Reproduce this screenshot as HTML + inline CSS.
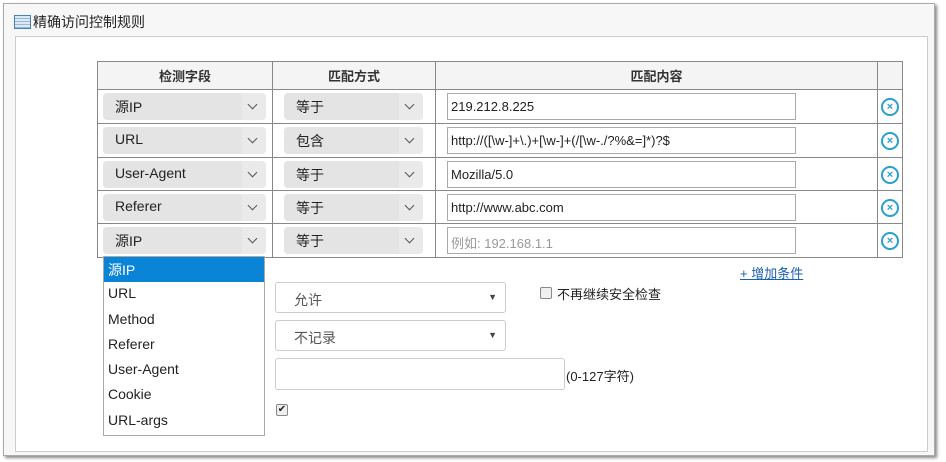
<!DOCTYPE html>
<html><head><meta charset="utf-8"><style>
*{box-sizing:border-box;margin:0;padding:0}
body{width:946px;height:462px;background:#fff;font-family:"Liberation Sans","Noto Sans CJK SC",sans-serif;font-size:14px;color:#222;position:relative;overflow:hidden}
.outer{position:absolute;left:3px;top:3px;width:932px;height:453px;border:1px solid #aaa;box-shadow:2px 2px 3px #888;background:#f7f7f7}
.title{position:absolute;left:14px;top:12px;font-size:14px;color:#222}
.title i{display:inline-block;width:17px;height:14px;border:1px solid #4a7fb5;background:repeating-linear-gradient(#dbe8f5 0 2px,#9bb8d8 2px 3px);vertical-align:-2px;margin-right:2px}
.panel{position:absolute;left:15px;top:36px;width:913px;height:416px;border:1px solid #ccc;background:#fff}
.a{position:absolute}
table{position:absolute;left:97px;top:61px;border-collapse:collapse}
td,th{border:1px solid #888;padding:0}
th{height:28px;background:#f4f4f4;font-weight:bold;font-size:13px;color:#333}
td{height:34px;position:relative}
tr.s td{height:33px}
.sel{position:absolute;top:3px;height:27px;background:#e4e4e4;border-radius:4px;font-size:14px;padding:4px 0 0 12px}
.sel b{position:absolute;right:0;top:0;width:24px;height:27px;background:#eaeaea;border-radius:0 4px 4px 0}
.sel b:after{content:"";position:absolute;left:7px;top:8px;width:6px;height:6px;border-right:1.5px solid #555;border-bottom:1.5px solid #555;transform:rotate(45deg)}
.inp{position:absolute;left:11px;top:3px;width:349px;height:27px;border:1px solid #aaa;font-size:13px;padding:5px 0 0 3px}
.x{position:absolute;left:3px;top:8px;width:18px;height:18px;border:2px solid #2a9fd0;border-radius:50%;color:#2a9fd0;font-size:11px;font-weight:bold;text-align:center;line-height:14px}
.dd{position:absolute;left:103px;top:256px;width:162px;height:180px;border:1px solid #aaa;background:#fff;font-size:14px}
.dd div{height:25.3px;padding:3px 0 0 4px}
.fs{position:absolute;left:275px;width:231px;height:31px;border:1px solid #ccc;border-radius:3px;font-size:14px;color:#555;padding:7px 0 0 18px}
.fs:after{content:"▼";position:absolute;right:8px;top:9px;font-size:9px;color:#444}
</style></head><body>
<div class="outer"></div>
<div class="title"><i></i>精确访问控制规则</div>
<div class="panel"></div>
<table>
<tr><th style="width:175px">检测字段</th><th style="width:163px">匹配方式</th><th style="width:442px">匹配内容</th><th style="width:25px"></th></tr>
<tr><td><div class="sel" style="left:5px;width:163px">源IP<b></b></div></td><td><div class="sel" style="left:11px;width:139px">等于<b></b></div></td><td><div class="inp">219.212.8.225</div></td><td><div class="x">×</div></td></tr>
<tr><td><div class="sel" style="left:5px;width:163px">URL<b></b></div></td><td><div class="sel" style="left:11px;width:139px">包含<b></b></div></td><td><div class="inp">http://([\w-]+\.)+[\w-]+(/[\w-./?%&amp;=]*)?$</div></td><td><div class="x">×</div></td></tr>
<tr class="s"><td><div class="sel" style="left:5px;width:163px">User-Agent<b></b></div></td><td><div class="sel" style="left:11px;width:139px">等于<b></b></div></td><td><div class="inp">Mozilla/5.0</div></td><td><div class="x">×</div></td></tr>
<tr class="s"><td><div class="sel" style="left:5px;width:163px">Referer<b></b></div></td><td><div class="sel" style="left:11px;width:139px">等于<b></b></div></td><td><div class="inp">http://www.abc.com</div></td><td><div class="x">×</div></td></tr>
<tr><td><div class="sel" style="left:5px;width:163px">源IP<b></b></div></td><td><div class="sel" style="left:11px;width:139px">等于<b></b></div></td><td><div class="inp" style="color:#999">例如: 192.168.1.1</div></td><td><div class="x">×</div></td></tr>
</table>
<div class="dd">
<div style="background:#0a84d6;color:#fff">源IP</div><div>URL</div><div>Method</div><div>Referer</div><div>User-Agent</div><div>Cookie</div><div>URL-args</div>
</div>
<div class="a" style="left:740px;top:263px;font-size:13px;color:#1a5fb4;text-decoration:underline">+ 增加条件</div>
<div class="fs" style="top:282px">允许</div>
<div class="fs" style="top:320px">不记录</div>
<div class="a" style="left:275px;top:358px;width:290px;height:32px;border:1px solid #ccc;border-radius:3px"></div>
<div class="a" style="left:566px;top:366px;font-size:13px">(0-127字符)</div>
<div class="a" style="left:540px;top:287px;width:12px;height:12px;border:1px solid #888;border-radius:2px;background:#f0f0f0"></div>
<div class="a" style="left:557px;top:284px;font-size:13px">不再继续安全检查</div>
<div class="a" style="left:276px;top:404px;width:12px;height:12px;border:1px solid #888;border-radius:2px;background:#eee;font-size:10px;line-height:10px;text-align:center">✔</div>
</body></html>
